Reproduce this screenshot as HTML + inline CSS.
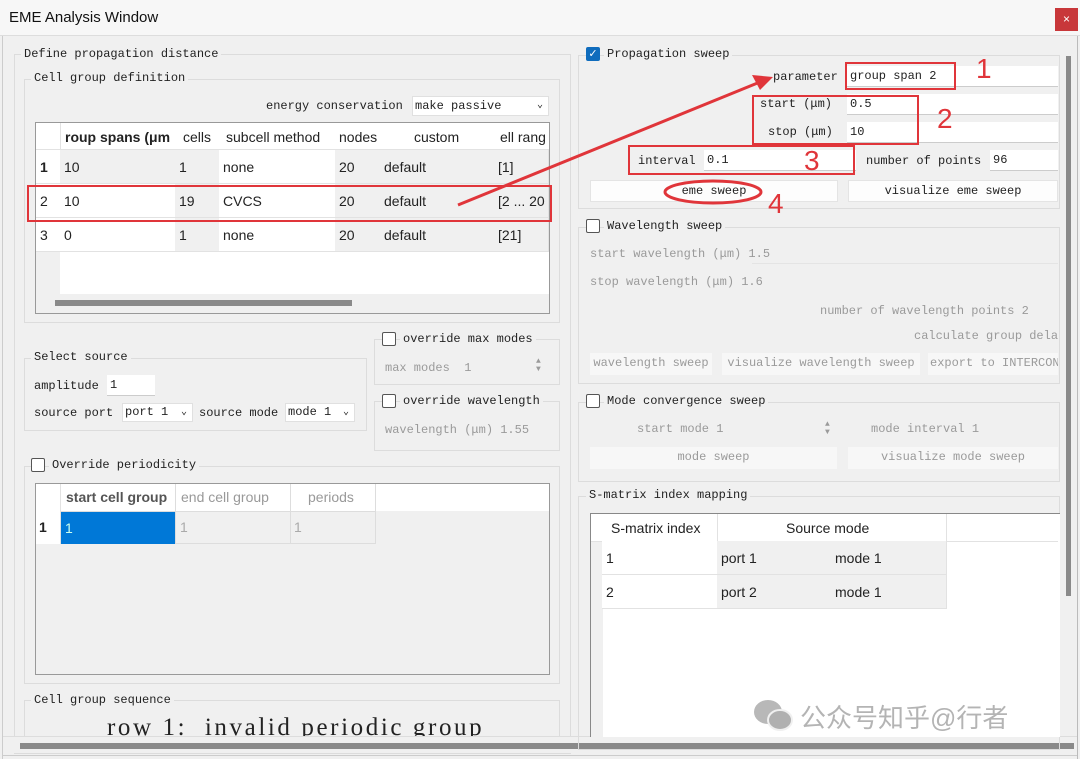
<!DOCTYPE html>
<html><head><meta charset="utf-8"><style>
*{margin:0;padding:0;box-sizing:border-box}
body{width:1080px;height:759px;background:#f0f0f0;position:relative;overflow:hidden;font-family:"Liberation Mono","Noto Serif CJK SC",monospace;font-size:12px;color:#222}
.a{position:absolute;white-space:nowrap}
.gb{position:absolute;border:1px solid #dcdcdc}
.lg{position:absolute;background:#f0f0f0;padding:0 3px;line-height:14px}
.in{position:absolute;background:#fff;border-bottom:1px solid #ccc;height:21px;line-height:20px;padding-left:3px}
.btn{position:absolute;background:#fdfdfd;border:1px solid #e4e4e4;height:22px;line-height:20px;text-align:center;white-space:nowrap}
.dis{color:#9a9a9a}
.cb{position:absolute;width:14px;height:14px;border:1px solid #555;border-radius:2px;background:#fff}
.sans{font-family:"Liberation Sans",sans-serif}
.cell{position:absolute;font-family:"Liberation Sans",sans-serif;font-size:14px;line-height:34px;padding-left:4px;border-right:1px solid #e2e2e2;border-bottom:1px solid #e2e2e2;overflow:hidden;white-space:nowrap}
.r{position:absolute;border:2px solid #e0353a}
.n{position:absolute;color:#e0353a;font-family:"Liberation Sans",sans-serif;font-size:28px;line-height:28px}
</style></head><body>
<div class="a" style="left:0;top:0;width:1080px;height:36px;background:#f7f7f7;border-bottom:1px solid #ddd"></div>
<div class="a sans" style="left:9px;top:9px;font-size:15px;color:#111">EME Analysis Window</div>
<div class="a sans" style="left:1055px;top:8px;width:23px;height:23px;background:#c8373a;color:#fff;text-align:center;line-height:22px;font-size:12px">×</div>
<div class="a" style="left:1077px;top:36px;width:1px;height:723px;background:#bbb"></div>
<div class="a" style="left:2px;top:36px;width:1px;height:723px;background:#ccc"></div>

<div class="gb" style="left:14px;top:54px;width:557px;height:700px"></div>
<div class="lg" style="left:21px;top:47px">Define propagation distance</div>
<div class="gb" style="left:24px;top:79px;width:536px;height:244px"></div>
<div class="lg" style="left:31px;top:71px">Cell group definition</div>
<div class="a" style="left:266px;top:99px">energy conservation</div>
<div class="a" style="left:412px;top:96px;width:137px;height:20px;background:#fff;border:1px solid #e0e0e0;padding-left:2px;line-height:18px">make passive<span style="position:absolute;right:5px;font-size:10px">&#8964;</span></div>

<div class="a" style="left:35px;top:122px;width:515px;height:192px;background:#fff;border:1px solid #999"></div>
<div class="a" style="left:36px;top:123px;width:513px;height:27px;background:#fff;border-bottom:1px solid #e2e2e2"></div>
<div class="a sans" style="left:65px;top:129px;font-size:14px;font-weight:bold">roup spans (μm</div>
<div class="a sans" style="left:183px;top:129px;font-size:14px">cells</div>
<div class="a sans" style="left:226px;top:129px;font-size:14px">subcell method</div>
<div class="a sans" style="left:339px;top:129px;font-size:14px">nodes</div>
<div class="a sans" style="left:414px;top:129px;font-size:14px">custom</div>
<div class="a sans" style="left:500px;top:129px;font-size:14px">ell rang</div>
<div class="a" style="left:60px;top:123px;width:1px;height:128px;background:#e2e2e2"></div>
<div class="cell" style="left:36px;top:150px;width:25px;height:34px;font-weight:bold;background:#fff">1</div>
<div class="cell" style="left:60px;top:150px;width:116px;height:34px;background:#f0f0f0">10</div>
<div class="cell" style="left:175px;top:150px;width:45px;height:34px;background:#f0f0f0">1</div>
<div class="cell" style="left:219px;top:150px;width:117px;height:34px;background:#fff">none</div>
<div class="cell" style="left:335px;top:150px;width:46px;height:34px;background:#f0f0f0">20</div>
<div class="cell" style="left:380px;top:150px;width:115px;height:34px;background:#f0f0f0">default</div>
<div class="cell" style="left:494px;top:150px;width:55px;height:34px;background:#f0f0f0">[1]</div>
<div class="cell" style="left:36px;top:184px;width:25px;height:34px;background:#fff">2</div>
<div class="cell" style="left:60px;top:184px;width:116px;height:34px;background:#fff">10</div>
<div class="cell" style="left:175px;top:184px;width:45px;height:34px;background:#f0f0f0">19</div>
<div class="cell" style="left:219px;top:184px;width:117px;height:34px;background:#fff">CVCS</div>
<div class="cell" style="left:335px;top:184px;width:46px;height:34px;background:#f0f0f0">20</div>
<div class="cell" style="left:380px;top:184px;width:115px;height:34px;background:#f0f0f0">default</div>
<div class="cell" style="left:494px;top:184px;width:55px;height:34px;background:#f0f0f0">[2 ... 20</div>
<div class="cell" style="left:36px;top:218px;width:25px;height:34px;background:#fff">3</div>
<div class="cell" style="left:60px;top:218px;width:116px;height:34px;background:#fff">0</div>
<div class="cell" style="left:175px;top:218px;width:45px;height:34px;background:#f0f0f0">1</div>
<div class="cell" style="left:219px;top:218px;width:117px;height:34px;background:#fff">none</div>
<div class="cell" style="left:335px;top:218px;width:46px;height:34px;background:#f0f0f0">20</div>
<div class="cell" style="left:380px;top:218px;width:115px;height:34px;background:#f0f0f0">default</div>
<div class="cell" style="left:494px;top:218px;width:55px;height:34px;background:#f0f0f0">[21]</div>
<div class="a" style="left:36px;top:252px;width:24px;height:42px;background:#f0f0f0"></div>
<div class="a" style="left:36px;top:294px;width:513px;height:19px;background:#f0f0f0"></div>
<div class="a" style="left:55px;top:300px;width:297px;height:6px;background:#8a8a8a"></div>
<div class="r" style="left:27px;top:185px;width:525px;height:37px"></div>

<div class="gb" style="left:24px;top:358px;width:343px;height:73px"></div>
<div class="lg" style="left:31px;top:350px">Select source</div>
<div class="a" style="left:34px;top:379px">amplitude</div>
<div class="in" style="left:107px;top:375px;width:48px">1</div>
<div class="a" style="left:34px;top:406px">source port</div>
<div class="a" style="left:122px;top:403px;width:71px;height:19px;background:#fff;border:1px solid #e0e0e0;padding-left:2px;line-height:17px">port 1<span style="position:absolute;right:5px;font-size:10px">&#8964;</span></div>
<div class="a" style="left:199px;top:406px">source mode</div>
<div class="a" style="left:285px;top:403px;width:70px;height:19px;background:#fff;border:1px solid #e0e0e0;padding-left:2px;line-height:17px">mode 1<span style="position:absolute;right:5px;font-size:10px">&#8964;</span></div>

<div class="gb" style="left:374px;top:339px;width:186px;height:46px"></div>
<div class="cb" style="left:382px;top:332px"></div>
<div class="lg" style="left:400px;top:332px">override max modes</div>
<div class="a dis" style="left:385px;top:361px">max modes &nbsp;1</div>
<div class="a dis" style="left:536px;top:358px;font-size:8px;line-height:8px">▲<br>▼</div>
<div class="gb" style="left:374px;top:401px;width:186px;height:50px"></div>
<div class="cb" style="left:382px;top:394px"></div>
<div class="lg" style="left:400px;top:394px">override wavelength</div>
<div class="a dis" style="left:385px;top:423px">wavelength (μm) 1.55</div>

<div class="gb" style="left:24px;top:466px;width:536px;height:218px"></div>
<div class="cb" style="left:31px;top:458px"></div>
<div class="lg" style="left:49px;top:458px">Override periodicity</div>
<div class="a" style="left:35px;top:483px;width:515px;height:192px;background:#f0f0f0;border:1px solid #999"></div>
<div class="a" style="left:36px;top:484px;width:513px;height:27px;background:#fff"></div>
<div class="a" style="left:36px;top:484px;width:25px;height:60px;background:#fff;border-right:1px solid #e2e2e2"></div>
<div class="a" style="left:61px;top:484px;width:315px;height:60px;border-right:1px solid #ddd;border-bottom:1px solid #ddd"></div>
<div class="a" style="left:61px;top:511px;width:315px;height:1px;background:#ddd"></div>
<div class="a" style="left:175px;top:484px;width:1px;height:60px;background:#ddd"></div>
<div class="a" style="left:290px;top:484px;width:1px;height:60px;background:#ddd"></div>
<div class="a sans" style="left:66px;top:489px;font-size:14px;font-weight:bold;color:#555">start cell group</div>
<div class="a sans" style="left:181px;top:489px;font-size:14px;color:#999">end cell group</div>
<div class="a sans" style="left:308px;top:489px;font-size:14px;color:#999">periods</div>
<div class="a sans" style="left:39px;top:519px;font-size:14px;font-weight:bold">1</div>
<div class="a sans" style="left:61px;top:512px;width:114px;height:32px;background:#0078d7;color:#cfe;font-size:14px;line-height:32px;padding-left:4px">1</div>
<div class="a sans" style="left:180px;top:519px;font-size:14px;color:#aaa">1</div>
<div class="a sans" style="left:294px;top:519px;font-size:14px;color:#aaa">1</div>

<div class="gb" style="left:24px;top:700px;width:536px;height:50px"></div>
<div class="lg" style="left:31px;top:693px">Cell group sequence</div>
<div class="a" style="left:20px;top:712px;width:540px;height:24px;overflow:hidden"><div style="position:absolute;left:87px;top:2px;font-family:'Liberation Serif',serif;font-size:25px;letter-spacing:2.6px;line-height:28px">row 1: &nbsp;invalid periodic group</div></div>
<div class="a" style="left:3px;top:736px;width:1074px;height:17px;background:#f0f0f0;border-top:1px solid #ddd"></div>
<div class="a" style="left:20px;top:743px;width:1054px;height:6px;background:#8a8a8a"></div>
<div class="a" style="left:3px;top:755px;width:1074px;height:1px;background:#ccc"></div>

<div class="gb" style="left:578px;top:55px;width:482px;height:154px"></div>
<div class="a" style="left:586px;top:47px;width:14px;height:14px;background:#0f6cbd;border-radius:2px;color:#fff;font-size:11px;line-height:14px;text-align:center;font-family:'DejaVu Sans'">✓</div>
<div class="lg" style="left:604px;top:47px">Propagation sweep</div>
<div class="a" style="left:773px;top:70px">parameter</div>
<div class="in" style="left:847px;top:66px;width:211px">group span 2</div>
<div class="a" style="left:760px;top:97px">start (μm)</div>
<div class="in" style="left:847px;top:94px;width:211px">0.5</div>
<div class="a" style="left:768px;top:125px">stop (μm)</div>
<div class="in" style="left:847px;top:122px;width:211px">10</div>
<div class="a" style="left:638px;top:154px">interval</div>
<div class="in" style="left:704px;top:150px;width:152px">0.1</div>
<div class="a" style="left:866px;top:154px">number of points</div>
<div class="in" style="left:990px;top:150px;width:68px">96</div>
<div class="btn" style="left:590px;top:180px;width:248px">eme sweep</div>
<div class="btn" style="left:848px;top:180px;width:210px">visualize eme sweep</div>

<div class="gb" style="left:578px;top:227px;width:482px;height:157px"></div>
<div class="cb" style="left:586px;top:219px"></div>
<div class="lg" style="left:604px;top:219px">Wavelength sweep</div>
<div class="a dis" style="left:590px;top:247px">start wavelength (μm) 1.5</div>
<div class="a dis" style="left:590px;top:275px">stop wavelength (μm) 1.6</div>
<div class="a" style="left:752px;top:243px;width:306px;height:21px;border-bottom:1px solid #e4e4e4"></div>
<div class="a dis" style="left:820px;top:304px">number of wavelength points 2</div>
<div class="a dis" style="left:914px;top:329px">calculate group dela</div>
<div class="btn dis" style="left:590px;top:353px;width:122px;border:none;background:#f7f7f7">wavelength sweep</div>
<div class="btn dis" style="left:722px;top:353px;width:198px;border:none;background:#f7f7f7">visualize wavelength sweep</div>
<div class="btn dis" style="left:928px;top:353px;width:130px;border:none;background:#f7f7f7;text-align:left;padding-left:2px;overflow:hidden">export to INTERCONN</div>

<div class="gb" style="left:578px;top:402px;width:482px;height:80px"></div>
<div class="cb" style="left:586px;top:394px"></div>
<div class="lg" style="left:604px;top:394px">Mode convergence sweep</div>
<div class="a dis" style="left:637px;top:422px">start mode 1</div>
<div class="a dis" style="left:825px;top:421px;font-size:8px;line-height:8px">▲<br>▼</div>
<div class="a dis" style="left:871px;top:422px">mode interval 1</div>
<div class="btn dis" style="left:590px;top:447px;width:247px;border:none;background:#f7f7f7">mode sweep</div>
<div class="btn dis" style="left:848px;top:447px;width:210px;border:none;background:#f7f7f7">visualize mode sweep</div>

<div class="gb" style="left:578px;top:496px;width:482px;height:254px"></div>
<div class="lg" style="left:586px;top:488px">S-matrix index mapping</div>
<div class="a" style="left:590px;top:513px;width:470px;height:224px;background:#fff;border-top:1px solid #888;border-left:1px solid #888"></div>
<div class="a" style="left:591px;top:541px;width:12px;height:196px;background:#f0f0f0"></div>
<div class="a" style="left:591px;top:541px;width:467px;height:1px;background:#e2e2e2"></div>
<div class="a sans" style="left:611px;top:520px;font-size:14px">S-matrix index</div>
<div class="a sans" style="left:786px;top:520px;font-size:14px">Source mode</div>
<div class="a" style="left:717px;top:514px;width:1px;height:94px;background:#e2e2e2"></div>
<div class="a" style="left:946px;top:514px;width:1px;height:94px;background:#e2e2e2"></div>
<div class="cell" style="left:602px;top:541px;width:116px;height:34px;background:#fff">1</div>
<div class="cell" style="left:717px;top:541px;width:115px;height:34px;background:#f0f0f0">port 1</div>
<div class="cell" style="left:831px;top:541px;width:116px;height:34px;background:#f0f0f0">mode 1</div>
<div class="cell" style="left:602px;top:575px;width:116px;height:34px;background:#fff">2</div>
<div class="cell" style="left:717px;top:575px;width:115px;height:34px;background:#f0f0f0">port 2</div>
<div class="cell" style="left:831px;top:575px;width:116px;height:34px;background:#f0f0f0">mode 1</div>

<div class="a" style="left:1062px;top:42px;width:15px;height:694px;background:#f0f0f0"></div>
<div class="a" style="left:1066px;top:56px;width:5px;height:540px;background:#8a8a8a"></div>

<div class="a" style="left:752px;top:698px;width:44px;height:34px">
<svg width="44" height="34"><ellipse cx="16" cy="14" rx="14" ry="12" fill="#b8b8b8"/><ellipse cx="28" cy="22" rx="12" ry="10" fill="#b0b0b0" stroke="#f0f0f0" stroke-width="2"/></svg></div>
<div class="a" style="left:800px;top:698px;font-family:'Liberation Sans','Noto Sans CJK SC',sans-serif;font-size:26px;color:#b4b4b4">公众号知乎@行者</div>

<div class="r" style="left:845px;top:62px;width:111px;height:28px"></div>
<div class="r" style="left:752px;top:95px;width:167px;height:50px"></div>
<div class="r" style="left:628px;top:145px;width:227px;height:30px"></div>
<div class="n" style="left:976px;top:55px">1</div>
<div class="n" style="left:937px;top:105px">2</div>
<div class="n" style="left:804px;top:147px">3</div>
<div class="n" style="left:768px;top:190px">4</div>
<svg class="a" style="left:0;top:0" width="1080" height="759">
<ellipse cx="713" cy="192" rx="48" ry="11" fill="none" stroke="#e0353a" stroke-width="3"/>
<line x1="458" y1="205" x2="760" y2="82" stroke="#e0353a" stroke-width="3"/>
<polygon points="773,77 752,75 760,90" fill="#e0353a"/>
</svg>
</body></html>
